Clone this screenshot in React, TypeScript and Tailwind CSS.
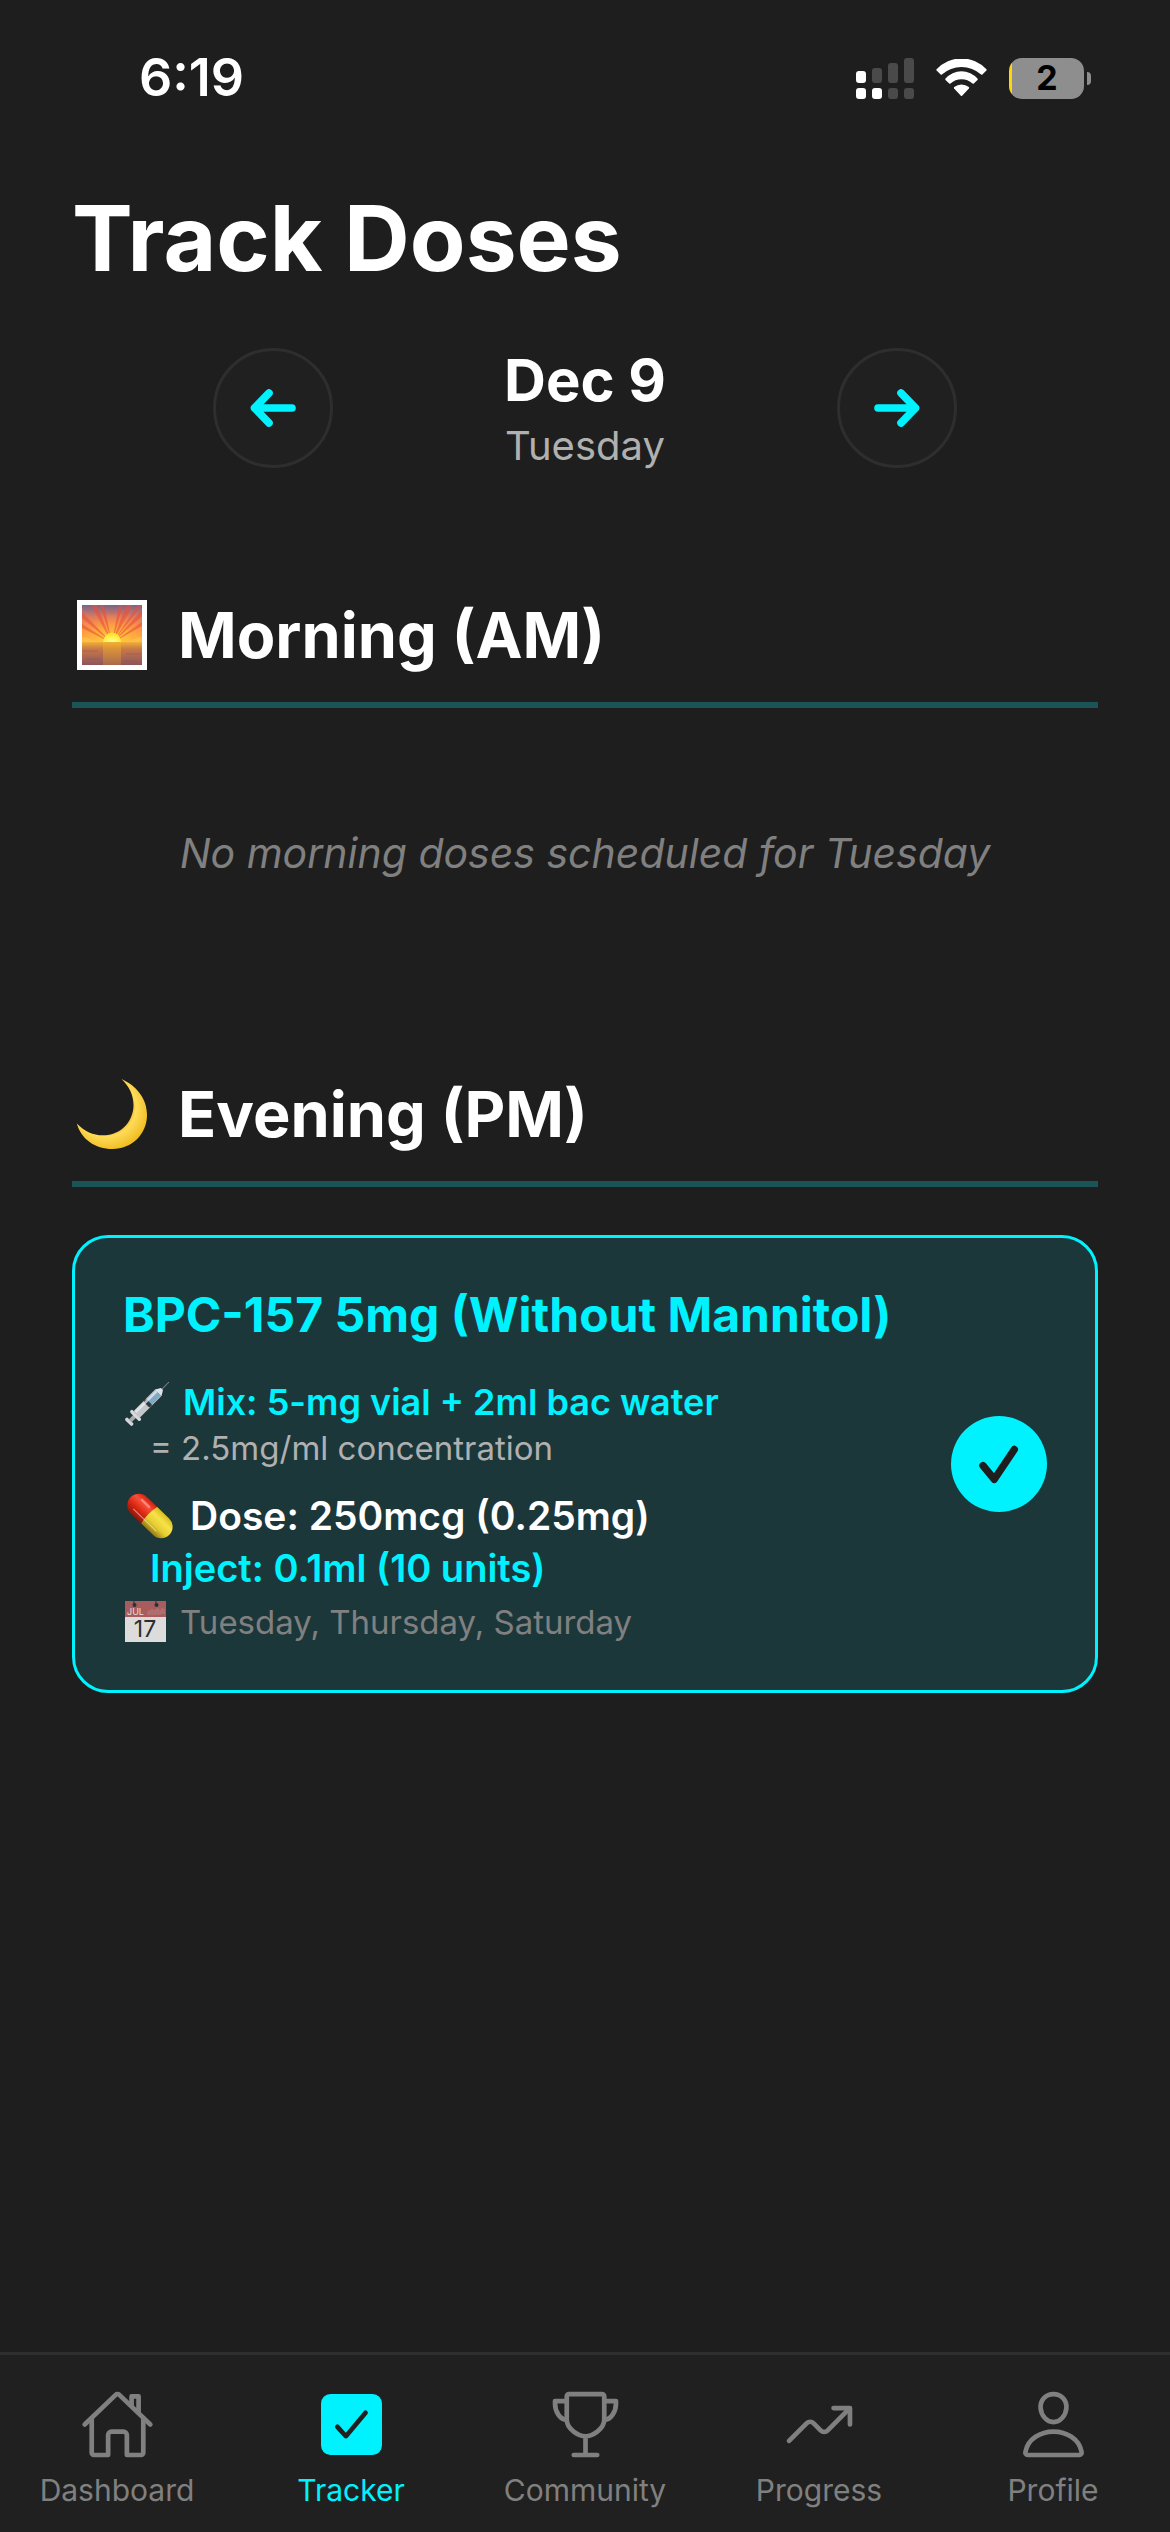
import React, { useState } from "react";
import {
  IoCheckbox,
  IoHomeOutline,
  IoPersonOutline,
  IoTrendingUpOutline,
  IoTrophyOutline,
} from "react-icons/io5";

function SignalIcon() {
  const bars = [
    { x: 0, y: 13, lit: true },
    { x: 16, y: 10, lit: false },
    { x: 32, y: 5, lit: false },
    { x: 48, y: 0, lit: false },
  ];
  return (
    <svg viewBox="0 0 58 41" className="h-[41px] w-[58px]" aria-label="Signal" role="img">
      {bars.map((b, i) => (
        <g key={b.x}>
          <rect x={b.x} y={b.y} width="10" height={25 - b.y} rx="3" fill={b.lit ? "#fff" : "#4a4a4a"} />
          <rect x={b.x} y="30" width="10" height="11" rx="3" fill={i < 2 ? "#fff" : "#4a4a4a"} />
        </g>
      ))}
    </svg>
  );
}

function WifiIcon() {
  return (
    <svg viewBox="0 0 51 38" className="h-[38px] w-[51px]" fill="#fff" aria-label="Wi-Fi" role="img">
      <path d="M.6 10.2A34.1 34.1 0 0 1 50.4 10.2Q51 10.9 50.4 11.5L46.4 15.4Q45.8 16 45.1 15.4A29.8 29.8 0 0 0 5.9 15.4Q5.2 16 4.6 15.4L.6 11.5Q0 10.9 .6 10.2Z" />
      <path d="M9.5 19.6A21.1 21.1 0 0 1 41.5 19.6Q42.1 20.3 41.5 20.9L37.8 24.6Q37.2 25.1 36.5 24.5A16.2 16.2 0 0 0 14.5 24.5Q13.8 25.1 13.2 24.6L9.5 20.9Q8.9 20.3 9.5 19.6Z" />
      <path d="M18.2 28.1A11.4 11.4 0 0 1 32.8 28.1Q33.5 28.8 32.9 29.5L26.1 36.8Q25.5 37.4 24.9 36.8L18.1 29.5Q17.5 28.8 18.2 28.1Z" />
    </svg>
  );
}

function Battery() {
  return (
    <div className="flex items-center gap-[3px]">
      <div className="flex h-[41px] w-[75px] items-center justify-center overflow-hidden rounded-[13px] bg-linear-to-r from-[#ffd60a] from-[3px] to-[#8e8e8e] to-[3px] pl-px text-[34px] leading-none font-bold text-black">
        2
      </div>
      <div className="h-[13px] w-1 rounded-r-full bg-[#8e8e8e]" />
    </div>
  );
}

function SunriseIcon() {
  return (
    <svg viewBox="0 0 72 72" className="size-[72px]" aria-hidden="true">
      <defs>
        <linearGradient id="sky" x1="0" y1="0" x2="0" y2="1">
          <stop offset="0" stopColor="#75648c" />
          <stop offset=".3" stopColor="#d9785f" />
          <stop offset=".65" stopColor="#ff8f42" />
          <stop offset="1" stopColor="#ffb52e" />
        </linearGradient>
        <radialGradient id="glow" cx=".5" cy="1" r=".8">
          <stop offset="0" stopColor="#ffd93a" />
          <stop offset=".5" stopColor="#ffb040" stopOpacity=".8" />
          <stop offset="1" stopColor="#ff8a50" stopOpacity="0" />
        </radialGradient>
        <linearGradient id="sea" x1="0" y1="0" x2="0" y2="1">
          <stop offset="0" stopColor="#f2b035" />
          <stop offset=".3" stopColor="#c87a46" />
          <stop offset="1" stopColor="#8c545c" />
        </linearGradient>
        <radialGradient id="sun" cx=".5" cy=".9" r=".8">
          <stop offset="0" stopColor="#fffca8" />
          <stop offset=".6" stopColor="#fff04a" />
          <stop offset="1" stopColor="#ffe42a" />
        </radialGradient>
        <linearGradient id="reflection" x1="0" y1="0" x2="0" y2="1">
          <stop offset="0" stopColor="#f5b02a" stopOpacity=".6" />
          <stop offset="1" stopColor="#d08a35" stopOpacity=".4" />
        </linearGradient>
        <clipPath id="skyClip">
          <rect x="6" y="6" width="60" height="38" />
        </clipPath>
      </defs>
      <rect x="1" y="1" width="70" height="70" fill="#fff" />
      <rect x="6" y="6" width="60" height="38" fill="url(#sky)" />
      <rect x="6" y="6" width="60" height="38" fill="url(#glow)" />
      <g clipPath="url(#skyClip)" fill="#e8503c" opacity=".6">
        <path d="M36 44L15 6h6zM36 44L50 6h7zM36 44L43 6h4zM36 44L6 13v6zM36 44L6 25v4zM36 44L66 11v6zM36 44L66 23v4zM36 44L62 6h4zM36 44L24 6h4z" />
      </g>
      <path d="M6 38q5 0 8 2t8 2v3H6zM66 38q-5 0-8 2t-8 2v3h16z" fill="#ffc04d" opacity=".8" />
      <path d="M27 44a9 10.500 0 0 1 18 0z" fill="url(#sun)" />
      <rect x="6" y="43" width="60" height="23" fill="url(#sea)" />
      <rect x="27" y="43" width="18" height="23" fill="url(#reflection)" />
      <path d="M6 52h16M50 55h16M10 60h15M48 62h14" stroke="#8f5560" strokeWidth="1" opacity=".5" />
    </svg>
  );
}

function MoonIcon() {
  return (
    <svg viewBox="0 0 72 72" className="size-[72px]" aria-hidden="true">
      <defs>
        <radialGradient id="moon" cx=".42" cy=".4" r=".62">
          <stop offset=".55" stopColor="#f0a818" />
          <stop offset=".68" stopColor="#ffdc58" />
          <stop offset=".85" stopColor="#f7cb3d" />
          <stop offset="1" stopColor="#efbe20" />
        </radialGradient>
      </defs>
      <path
        d="M45.5 1C61 8 71 21 71 37C71 56 56 71 36.500 71C19 71 5 61 .8 45.500C10 55 20 58.500 32 57C46 55 57 43 57.500 28C57.700 17 53 8 45.500 1Z"
        fill="url(#moon)"
      />
    </svg>
  );
}

function SyringeIcon() {
  return (
    <svg viewBox="0 0 48 48" className="size-12" aria-hidden="true">
      <g transform="translate(5 45) rotate(-45)">
        <path d="M42 0H58" stroke="#7b878a" strokeWidth="1" />
        <rect x="0" y="-5" width="3.500" height="10" rx="1.700" fill="#d6d6d8" />
        <rect x="3" y="-2" width="8" height="4" fill="#a9a9ad" />
        <rect x="9" y="-7" width="3.500" height="14" rx="1.700" fill="#d9d9db" />
        <rect x="12" y="-4.500" width="32" height="9" rx="1.500" fill="#c3c6ca" />
        <rect x="29" y="-4" width="14" height="8" fill="#7fa9c4" />
        <rect x="26" y="-4.500" width="4" height="9" rx="1.500" fill="#303a42" />
        <rect x="13" y="-3.500" width="30" height="2.500" fill="#f1f3f5" opacity=".7" />
        <path d="M43-4.500L48-1.500v3L43 4.500z" fill="#dfe3e6" />
      </g>
    </svg>
  );
}

function PillIcon() {
  return (
    <svg viewBox="0 0 52 52" className="size-[52px]" aria-hidden="true">
      <defs>
        <linearGradient id="pillRed" x1="0" y1="0" x2="0" y2="1">
          <stop offset="0" stopColor="#d81f0c" />
          <stop offset=".3" stopColor="#f5503a" />
          <stop offset=".6" stopColor="#e02a14" />
          <stop offset="1" stopColor="#8f1608" />
        </linearGradient>
        <linearGradient id="pillYellow" x1="0" y1="0" x2="0" y2="1">
          <stop offset="0" stopColor="#d8bd1c" />
          <stop offset=".3" stopColor="#f6e24a" />
          <stop offset=".65" stopColor="#e6cd30" />
          <stop offset="1" stopColor="#947812" />
        </linearGradient>
      </defs>
      <g transform="translate(27 26) rotate(44)">
        <path d="M0-11.500H-15.500A11.500 11.500 0 0 0-15.500 11.500H0z" fill="url(#pillRed)" />
        <path d="M-1-11.500H15.500A11.500 11.500 0 0 1 15.500 11.500H-1Q-4 0-1-11.500z" fill="url(#pillYellow)" />
        <path d="M-17 6.500H15" stroke="#fff" strokeWidth="1" opacity=".5" />
        <path d="M-17-6H-7" stroke="#fff" strokeWidth="2.500" strokeLinecap="round" opacity=".35" />
      </g>
    </svg>
  );
}

function CalendarIcon() {
  return (
    <svg viewBox="0 0 45 41" className="h-[41px] w-[45px] overflow-visible" aria-hidden="true">
      <rect x="2" y="0" width="41" height="41" fill="#dcdcdc" />
      <rect x="2" y="0" width="41" height="16" fill="#a85c5d" />
      <path d="M11 0v4M33 0v4" stroke="#1c373a" strokeWidth="1" />
      <circle cx="11.500" cy="4" r="2" fill="#1c373a" />
      <circle cx="33.500" cy="4" r="2" fill="#1c373a" />
      <path d="M25 10v4M27 9v5M29 8v6M31 9v5M33 8v6M35 7v7M37 9v5M39 7v6M41 8v5" stroke="#c58f8f" strokeWidth="1" opacity=".7" />
      <text x="4" y="14" fontSize="9" fontFamily="Inter, sans-serif" fill="#ecdcdc">
        JUL
      </text>
      <text x="22" y="36" fontSize="23" textAnchor="middle" fontFamily="Inter, sans-serif" fill="#2d2d2d">
        17
      </text>
    </svg>
  );
}

function ArrowButton({ label, flip, onClick }: { label: string; flip?: boolean; onClick: () => void }) {
  return (
    <button
      type="button"
      aria-label={label}
      onClick={onClick}
      className="flex size-[120px] items-center justify-center rounded-full border-3 border-[#2e2e2e] bg-[#202020]"
    >
      <svg
        viewBox="0 0 46 38"
        className={flip ? "h-[38px] w-[46px] rotate-180" : "h-[38px] w-[46px]"}
        fill="none"
        stroke="#00f2ff"
        strokeWidth="7.6"
        strokeLinecap="round"
        strokeLinejoin="round"
      >
        <path d="M19 4L4.500 19L19 34M4.500 19H42" />
      </svg>
    </button>
  );
}

function SectionHeader({ icon, title }: { icon: React.ReactNode; title: string }) {
  return (
    <div className="flex items-center gap-[30px] border-b-6 border-[#1a5457] pb-[31px] pl-1">
      {icon}
      <h2 className="text-[63px] leading-[72px] font-bold">{title}</h2>
    </div>
  );
}

const tabs = [
  { label: "Dashboard", Icon: IoHomeOutline },
  { label: "Tracker", Icon: IoCheckbox },
  { label: "Community", Icon: IoTrophyOutline },
  { label: "Progress", Icon: IoTrendingUpOutline },
  { label: "Profile", Icon: IoPersonOutline },
];

const days = ["Sunday", "Monday", "Tuesday", "Wednesday", "Thursday", "Friday", "Saturday"];

export default function App() {
  const [date, setDate] = useState(new Date(2025, 11, 9));
  const [taken, setTaken] = useState(true);
  const shift = (n: number) => setDate(new Date(date.getFullYear(), date.getMonth(), date.getDate() + n));
  const day = days[date.getDay()];

  return (
    <div className="flex min-h-screen flex-col bg-[#1e1e1e] font-['Inter',sans-serif] text-white">
      <header className="flex h-[156px] shrink-0 items-center justify-between pr-[79px] pl-[139px]">
        <time className="text-[52px] font-semibold">6:19</time>
        <div className="flex items-center gap-[22px]">
          <SignalIcon />
          <WifiIcon />
          <Battery />
        </div>
      </header>

      <main className="flex-1 px-[72px] pt-7">
        <h1 className="text-[91px] leading-[108px] font-bold">Track Doses</h1>

        <div className="mt-[52px] flex items-center justify-between px-[141px]">
          <ArrowButton label="Previous day" onClick={() => shift(-1)} />
          <div className="-mb-1 text-center">
            <p className="text-[58px] leading-[72px] font-bold">
              {date.toLocaleDateString("en-US", { month: "short", day: "numeric" })}
            </p>
            <p className="text-[40px] leading-[60px] text-[#b0b0b0]">{day}</p>
          </div>
          <ArrowButton label="Next day" flip onClick={() => shift(1)} />
        </div>

        <section className="mt-[127px]">
          <SectionHeader icon={<SunriseIcon />} title="Morning (AM)" />
          <p className="pt-[115px] pb-[195px] text-center text-[41px] leading-[60px] text-[#808080] italic">
            No morning doses scheduled for {day}
          </p>
        </section>

        <section>
          <SectionHeader icon={<MoonIcon />} title="Evening (PM)" />
          <article className="mt-12 flex items-center justify-between rounded-[36px] border-3 border-[#00f2ff] bg-[#1c373a] p-12">
            <div>
              <h3 className="text-[48px] leading-[58px] font-bold text-[#00f2ff]">BPC-157 5mg (Without Mannitol)</h3>
              <div className="mt-[34px] flex items-center gap-3 text-[36px] leading-[48px] font-semibold text-[#00f2ff]">
                <SyringeIcon />
                <p>Mix: 5-mg vial + 2ml bac water</p>
              </div>
              <p className="pl-[27px] text-[33px] leading-[44px] text-[#b0b0b0]">= 2.5mg/ml concentration</p>
              <div className="mt-[19px] flex items-center gap-[15px] text-[39px] leading-[54px] font-semibold">
                <PillIcon />
                <p>Dose: 250mcg (0.25mg)</p>
              </div>
              <p className="pl-[27px] text-[38px] leading-[50px] font-semibold text-[#00f2ff]">Inject: 0.1ml (10 units)</p>
              <div className="mt-2 flex items-center gap-3 text-[33px] leading-[40px] text-[#808080]">
                <CalendarIcon />
                <p>Tuesday, Thursday, Saturday</p>
              </div>
            </div>
            <button
              type="button"
              aria-label="Dose taken"
              aria-pressed={taken}
              onClick={() => setTaken(!taken)}
              className="size-24 shrink-0 rounded-full bg-[#00f2ff]"
            >
              <svg
                viewBox="0 0 96 96"
                className="size-24"
                fill="none"
                stroke="#1e1e1e"
                strokeWidth="7.4"
                strokeLinecap="round"
                strokeLinejoin="round"
              >
                {taken && <path d="M32 49.700L43.300 63.300L63.300 33.500" />}
              </svg>
            </button>
          </article>
        </section>
      </main>

      <nav className="grid shrink-0 grid-cols-5 border-t-3 border-[#2e2e2e] bg-[#202020] pt-8 pb-[22px]">
        {tabs.map(({ label, Icon }) => (
          <a
            key={label}
            href={`#${label.toLowerCase()}`}
            aria-current={label === "Tracker" ? "page" : undefined}
            className={`flex flex-col items-center gap-2 text-[30px] leading-[40px] ${
              label === "Tracker" ? "text-[#00f2ff]" : "text-[#808080]"
            }`}
          >
            <Icon className="size-[75px]" aria-hidden="true" />
            {label}
          </a>
        ))}
      </nav>
    </div>
  );
}
